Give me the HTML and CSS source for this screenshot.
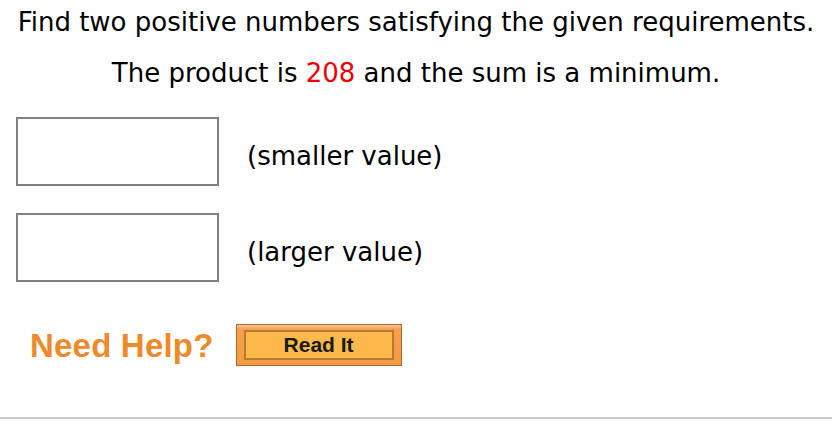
FILE: index.html
```html
<!DOCTYPE html>
<html>
<head>
<meta charset="utf-8">
<link rel="stylesheet" href="styles.css">
</head>
<body>
<div class="page">
  <p class="prompt">Find two positive numbers satisfying the given requirements.</p>
  <p class="cond">The product is <span class="red">208</span> and the sum is a minimum.</p>
  <div class="row">
    <div class="box"></div>
    <span class="label">(smaller value)</span>
  </div>
  <div class="row">
    <div class="box"></div>
    <span class="label">(larger value)</span>
  </div>
  <div class="help">
    <span class="need">Need Help?</span>
    <span class="btn"><span class="btn-inner">Read It</span></span>
  </div>
  <hr class="rule">
</div>
</body>
</html>
```
FILE: styles.css
```css
html, body { margin: 0; padding: 0; background: #fff; }
.page {
  width: 832px;
  height: 442px;
  font-family: "DejaVu Sans", Verdana, sans-serif;
  color: #000;
  overflow: hidden;
}
.prompt {
  margin: 0;
  padding-top: 7px;
  font-size: 26px;
  line-height: 30px;
  text-align: center;
}
.cond {
  margin: 0;
  padding-top: 21px;
  font-size: 26px;
  line-height: 30px;
  text-align: center;
}
.red { color: #ee0000; }
.row {
  display: flex;
  align-items: center;
  margin-left: 16px;
  margin-top: 29px;
}
.row + .row { margin-top: 27px; }
.box {
  width: 199px;
  height: 65px;
  border: 2px solid #808080;
  background: #fff;
}
.label {
  margin-left: 28px;
  margin-top: 9px;
  font-size: 26px;
  line-height: 30px;
}
.help {
  display: flex;
  align-items: center;
  margin-top: 42px;
  margin-left: 30px;
}
.need {
  font-family: "Liberation Sans", Arial, sans-serif;
  font-weight: bold;
  font-size: 33px;
  letter-spacing: 0.2px;
  line-height: 36px;
  margin-top: 2px;
  color: #ef8a2c;
}
.btn {
  margin-left: 22px;
  width: 164px;
  height: 40px;
  border: 1px solid #a8692a;
  background: linear-gradient(#f6c9a0 0px, #f6a04e 4px, #f59a40 100%);
  display: flex;
  align-items: center;
  justify-content: center;
}
.btn-inner {
  width: 146px;
  height: 26px;
  border: 2px solid #b77a35;
  background: #fbb94c;
  font-family: "Liberation Sans", Arial, sans-serif;
  font-weight: bold;
  font-size: 21px;
  line-height: 26px;
  text-align: center;
  color: #1a1a1a;
}
.rule {
  margin: 51px 0 0 0;
  border: 0;
  height: 2px;
  background: #c8c8c8;
}
```
